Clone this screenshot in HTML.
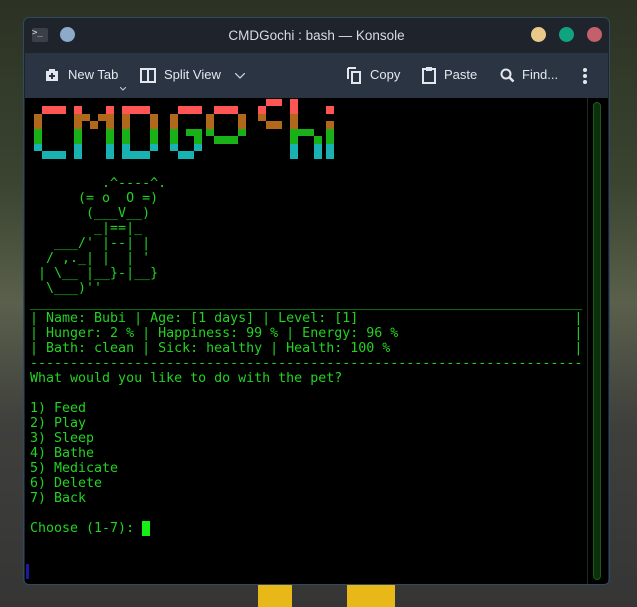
<!DOCTYPE html>
<html><head><meta charset="utf-8"><style>
html,body{margin:0;padding:0;width:637px;height:607px;overflow:hidden;}
body{position:relative;background:linear-gradient(180deg,#2c3224 0%,#3a4430 30%,#5a604c 50%,#3f3f3c 70%,#353535 100%);font-family:"Liberation Sans","DejaVu Sans",sans-serif;}
.road{position:absolute;top:585px;height:22px;background:#e8b818;}
.win{position:absolute;left:23px;top:17px;width:587px;height:568px;background:#1f232b;border-radius:6px;border:1px solid #2f4a60;box-sizing:border-box;overflow:hidden;}
.title{position:absolute;left:0;top:0;width:100%;height:35px;color:#d8dce2;font-size:13.5px;text-align:center;line-height:35px;}
.tb{position:absolute;left:1px;top:35px;width:583px;height:45px;background:#2a3443;color:#e4e8ee;font-size:13px;}
.tb span{position:absolute;top:14px;}
.term{position:absolute;left:1px;top:80px;width:583px;height:486px;background:#000;}
.c{position:absolute;border-radius:50%;width:15px;height:15px;top:9px;}
pre{position:absolute;margin:0;left:5px;top:77.5px;font-family:"DejaVu Sans Mono","Liberation Mono",monospace;font-size:13.3px;line-height:15px;color:#22d322;}
.b{position:absolute;}
.R{background:#ff5555}.O{background:#b2681a}.G{background:#18b218}.C{background:#18b2b2}
</style></head><body>
<div class="road" style="left:258px;width:34px"></div>
<div class="road" style="left:347px;width:48px"></div>
<div class="win">
 <div class="title">CMDGochi : bash — Konsole</div>
 <div style="position:absolute;left:8px;top:10px;width:16px;height:14px;background:#3a3f48;border-radius:2px;color:#ddd;font-size:9px;line-height:11px;font-family:'DejaVu Sans Mono',monospace">&gt;_</div>
 <div class="c" style="left:36px;background:#8eaacb"></div>
 <div class="c" style="left:507px;background:#e8c98a"></div>
 <div class="c" style="left:535px;background:#10a37f"></div>
 <div class="c" style="left:563px;background:#c4606c"></div>
 <div class="tb">
  <svg style="position:absolute;left:19px;top:14px" width="16" height="16" viewBox="0 0 16 16"><path d="M2 4h12v10H2z M5 4V2h6v2" fill="#e4e8ee"/><path d="M8 6v6M5 9h6" stroke="#2a3443" stroke-width="2"/></svg>
  <span style="left:43px">New Tab</span>
  <svg style="position:absolute;left:95px;top:34px" width="6" height="4"><path d="M0 0l3 3 3-3" stroke="#ccc" fill="none"/></svg>
  <svg style="position:absolute;left:115px;top:15px" width="16" height="15"><rect x="1" y="1" width="14" height="13" fill="none" stroke="#e4e8ee" stroke-width="2"/><path d="M8 1v13" stroke="#e4e8ee" stroke-width="2"/></svg>
  <span style="left:139px">Split View</span>
  <svg style="position:absolute;left:210px;top:20px" width="10" height="6"><path d="M0 0l5 5 5-5" stroke="#ccc" fill="none" stroke-width="1.3"/></svg>
  <svg style="position:absolute;left:322px;top:14px" width="14" height="17"><path d="M1 1h8M1 1v11" stroke="#e4e8ee" stroke-width="2" fill="none"/><rect x="5" y="5" width="8" height="11" fill="none" stroke="#e4e8ee" stroke-width="2"/></svg>
  <span style="left:345px">Copy</span>
  <svg style="position:absolute;left:397px;top:13px" width="14" height="18"><rect x="1" y="3" width="12" height="14" fill="none" stroke="#e4e8ee" stroke-width="2"/><rect x="4" y="1" width="6" height="4" fill="#e4e8ee"/></svg>
  <span style="left:419px">Paste</span>
  <svg style="position:absolute;left:475px;top:15px" width="15" height="15"><circle cx="6" cy="6" r="4.5" fill="none" stroke="#e4e8ee" stroke-width="2"/><path d="M9.5 9.5l4 4" stroke="#e4e8ee" stroke-width="2.5"/></svg>
  <span style="left:497px">Find...</span>
  <div style="position:absolute;left:558px;top:15px;width:4px;height:4px;border-radius:2px;background:#e4e8ee;box-shadow:0 6px 0 #e4e8ee,0 12px 0 #e4e8ee"></div>
 </div>
 <div class="term">
  <div style="position:absolute;left:562px;top:0;width:1px;height:486px;background:#1c2a20"></div>
  <div style="position:absolute;left:568px;top:4px;width:8px;height:478px;background:#0b300b;border:1px solid #1b5a1b;border-radius:5px;box-sizing:border-box"></div>
  <div style="position:absolute;left:1px;top:466px;width:3px;height:15px;background:#1a1a9a"></div>
<pre>         .^----^.
      (= o  O =)
       (___V__)
        _|==|_
   ___/' |--| |
  / ,._| |  | '
 | \__ |__}-|__}
  \___)''
_____________________________________________________________________
| Name: Bubi | Age: [1 days] | Level: [1]                           |
| Hunger: 2 % | Happiness: 99 % | Energy: 96 %                      |
| Bath: clean | Sick: healthy | Health: 100 %                       |
---------------------------------------------------------------------
What would you like to do with the pet?

1) Feed
2) Play
3) Sleep
4) Bathe
5) Medicate
6) Delete
7) Back

Choose (1-7): <span style="background:#14f014">&nbsp;</span></pre>
 </div>
</div>
<div id="logo">
<div class="b R" style="left:42px;top:106px;width:24px;height:8px"></div>
<div class="b O" style="left:34px;top:114px;width:8px;height:15px"></div>
<div class="b G" style="left:34px;top:129px;width:8px;height:15px"></div>
<div class="b C" style="left:34px;top:144px;width:8px;height:7px"></div>
<div class="b C" style="left:42px;top:151px;width:24px;height:8px"></div>
<div class="b R" style="left:74px;top:106px;width:8px;height:8px"></div>
<div class="b O" style="left:74px;top:114px;width:8px;height:15px"></div>
<div class="b G" style="left:74px;top:129px;width:8px;height:15px"></div>
<div class="b C" style="left:74px;top:144px;width:8px;height:15px"></div>
<div class="b R" style="left:106px;top:106px;width:8px;height:8px"></div>
<div class="b O" style="left:106px;top:114px;width:8px;height:15px"></div>
<div class="b G" style="left:106px;top:129px;width:8px;height:15px"></div>
<div class="b C" style="left:106px;top:144px;width:8px;height:15px"></div>
<div class="b O" style="left:82px;top:114px;width:8px;height:7px"></div>
<div class="b O" style="left:98px;top:114px;width:8px;height:7px"></div>
<div class="b O" style="left:90px;top:121px;width:8px;height:8px"></div>
<div class="b R" style="left:122px;top:106px;width:28px;height:8px"></div>
<div class="b O" style="left:122px;top:114px;width:8px;height:15px"></div>
<div class="b G" style="left:122px;top:129px;width:8px;height:15px"></div>
<div class="b C" style="left:122px;top:144px;width:8px;height:15px"></div>
<div class="b C" style="left:130px;top:151px;width:20px;height:8px"></div>
<div class="b O" style="left:150px;top:114px;width:8px;height:15px"></div>
<div class="b G" style="left:150px;top:129px;width:8px;height:15px"></div>
<div class="b C" style="left:150px;top:144px;width:8px;height:7px"></div>
<div class="b R" style="left:178px;top:106px;width:24px;height:8px"></div>
<div class="b O" style="left:170px;top:114px;width:8px;height:15px"></div>
<div class="b G" style="left:170px;top:129px;width:8px;height:15px"></div>
<div class="b C" style="left:170px;top:144px;width:8px;height:7px"></div>
<div class="b C" style="left:178px;top:151px;width:16px;height:8px"></div>
<div class="b G" style="left:186px;top:129px;width:16px;height:7px"></div>
<div class="b G" style="left:194px;top:136px;width:8px;height:8px"></div>
<div class="b C" style="left:194px;top:144px;width:8px;height:7px"></div>
<div class="b R" style="left:214px;top:106px;width:24px;height:8px"></div>
<div class="b O" style="left:206px;top:114px;width:8px;height:15px"></div>
<div class="b O" style="left:238px;top:114px;width:8px;height:15px"></div>
<div class="b G" style="left:206px;top:129px;width:8px;height:7px"></div>
<div class="b G" style="left:238px;top:129px;width:8px;height:7px"></div>
<div class="b G" style="left:214px;top:136px;width:24px;height:8px"></div>
<div class="b R" style="left:266px;top:99px;width:16px;height:7px"></div>
<div class="b R" style="left:258px;top:106px;width:8px;height:8px"></div>
<div class="b O" style="left:258px;top:114px;width:8px;height:7px"></div>
<div class="b O" style="left:266px;top:121px;width:16px;height:8px"></div>
<div class="b R" style="left:290px;top:99px;width:8px;height:15px"></div>
<div class="b O" style="left:290px;top:114px;width:8px;height:15px"></div>
<div class="b G" style="left:290px;top:129px;width:8px;height:15px"></div>
<div class="b C" style="left:290px;top:144px;width:8px;height:15px"></div>
<div class="b G" style="left:298px;top:129px;width:16px;height:7px"></div>
<div class="b G" style="left:314px;top:136px;width:8px;height:8px"></div>
<div class="b C" style="left:314px;top:144px;width:8px;height:15px"></div>
<div class="b R" style="left:326px;top:106px;width:8px;height:8px"></div>
<div class="b O" style="left:326px;top:121px;width:8px;height:8px"></div>
<div class="b G" style="left:326px;top:129px;width:8px;height:15px"></div>
<div class="b C" style="left:326px;top:144px;width:8px;height:15px"></div>
</div>
</body></html>
